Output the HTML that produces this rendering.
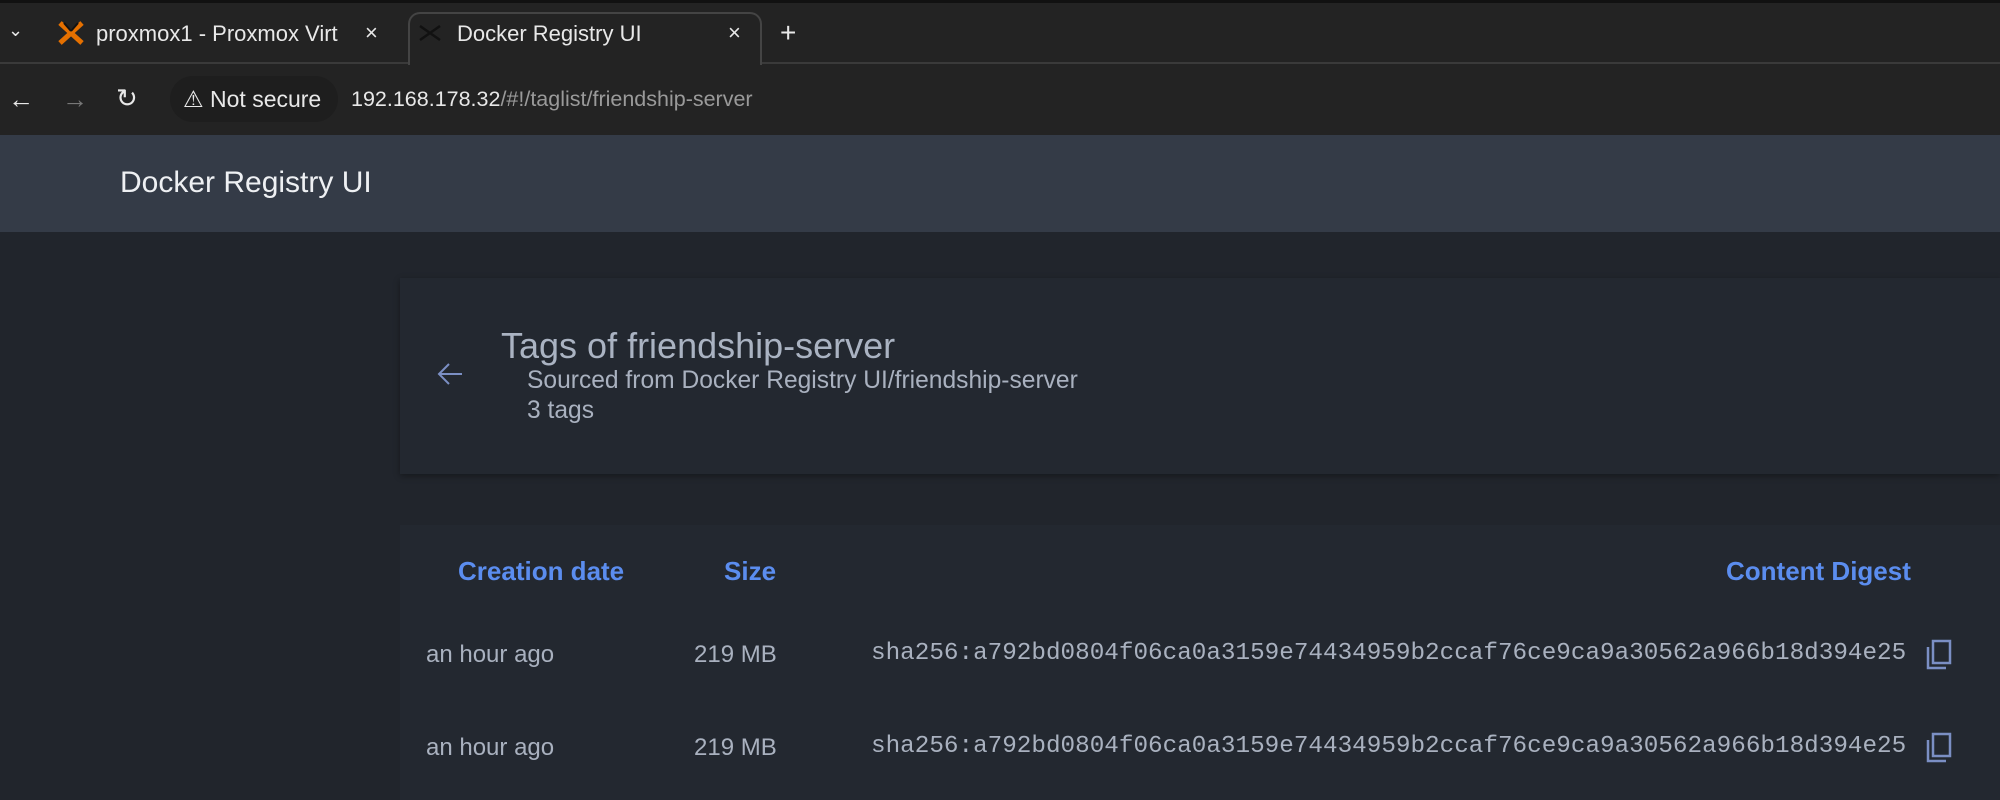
<!DOCTYPE html>
<html><head><meta charset="utf-8"><style>
*{margin:0;padding:0;box-sizing:border-box}
body{width:2000px;height:800px;overflow:hidden;background:#21252c;font-family:"Liberation Sans",sans-serif;position:relative}
.abs{position:absolute;white-space:nowrap}
#tabs{left:0;top:0;width:2000px;height:64px;background:#232323;border-top:3px solid #111}
#tool{left:0;top:64px;width:2000px;height:71px;background:#232323}
#sep{left:0;top:62px;width:2000px;height:2px;background:#3a3a3a}
#atab{left:408px;top:12px;width:354px;height:53px;background:#232323;border:2px solid #444;border-bottom:none;border-radius:12px 12px 0 0}
#hdr{left:0;top:135px;width:2000px;height:97px;background:#343b47}
.t{color:#e8e8e8;font-size:22px}
#card1{left:400px;top:278px;width:1600px;height:196px;background:#232830;box-shadow:0 2px 6px rgba(0,0,0,.35)}
#card2{left:400px;top:525px;width:1600px;height:275px;background:#232830}
.th{color:#5b8def;font-weight:bold;font-size:26px;font-family:"Liberation Sans Narrow","Liberation Sans",sans-serif}
.td{color:#a9b1bf;font-size:24px}
.mono{color:#a9b1bf;font-size:24.3px;font-family:"Liberation Mono",monospace}
</style></head><body>
<div class="abs" id="tabs"></div>
<div class="abs" id="tool"></div>
<div class="abs" id="sep"></div>
<div class="abs" id="atab"></div>
<div class="abs t" style="left:8px;top:20px;font-size:18px">&#8964;</div>
<svg class="abs" style="left:58px;top:21px" width="26" height="24" viewBox="0 0 26 24"><path d="M2 2L24 22M24 2L2 22" stroke="#e57000" stroke-width="5"/><path d="M6 2L13 10M20 2L13 10" stroke="#111" stroke-width="2"/></svg>
<div class="abs t" style="left:96px;top:21px">proxmox1 - Proxmox Virt</div>
<div class="abs t" style="left:365px;top:20px">×</div>
<svg class="abs" style="left:418px;top:24px" width="24" height="18"><path d="M2 2L22 16M22 2L2 16" stroke="#111" stroke-width="2.5"/></svg>
<div class="abs t" style="left:457px;top:21px">Docker Registry UI</div>
<div class="abs t" style="left:728px;top:20px">×</div>
<div class="abs t" style="left:780px;top:17px;font-size:28px">+</div>
<div class="abs t" style="left:8px;top:84px;font-size:26px">&#8592;</div>
<div class="abs t" style="left:62px;top:84px;font-size:26px;color:#777">&#8594;</div>
<div class="abs t" style="left:116px;top:83px;font-size:26px">&#8635;</div>
<div class="abs" style="left:170px;top:76px;width:168px;height:46px;border-radius:23px;background:#1e1e1e"></div>
<div class="abs t" style="left:183px;top:86px;font-size:23px">&#9888; Not secure</div>
<div class="abs t" style="left:351px;top:87px;font-size:21.5px">192.168.178.32<span style="color:#9a9a9a">/#!/taglist/friendship-server</span></div>
<div class="abs" id="hdr"></div>
<div class="abs" style="left:120px;top:166px;color:#eef0f3;font-size:30px">Docker Registry UI</div>
<div class="abs" id="card1"></div>
<svg class="abs" style="left:436px;top:362px" width="28" height="24"><path d="M26 12H3M13 2L3 12L13 22" stroke="#7b8fc4" stroke-width="2" fill="none"/></svg>
<div class="abs" style="left:501px;top:325px;color:#aab3c2;font-size:36px">Tags of friendship-server</div>
<div class="abs td" style="left:527px;top:367px;font-size:24.6px">Sourced from Docker Registry UI/friendship-server</div>
<div class="abs td" style="left:527px;top:397px;font-size:24.6px">3 tags</div>
<div class="abs" id="card2"></div>
<div class="abs th" style="left:458px;top:556px">Creation date</div>
<div class="abs th" style="left:724px;top:556px">Size</div>
<div class="abs th" style="left:1726px;top:556px">Content Digest</div>
<div class="abs td" style="left:426px;top:641px">an hour ago</div>
<div class="abs td" style="left:694px;top:641px">219 MB</div>
<div class="abs mono" style="left:871px;top:640px">sha256:a792bd0804f06ca0a3159e74434959b2ccaf76ce9ca9a30562a966b18d394e25</div>
<div class="abs td" style="left:426px;top:734px">an hour ago</div>
<div class="abs td" style="left:694px;top:734px">219 MB</div>
<div class="abs mono" style="left:871px;top:733px">sha256:a792bd0804f06ca0a3159e74434959b2ccaf76ce9ca9a30562a966b18d394e25</div>
<svg class="abs" style="left:1926px;top:639px" width="28" height="32"><rect x="7" y="2" width="17" height="22" stroke="#7b8fc4" stroke-width="2.5" fill="none"/><path d="M2 8V29H20" stroke="#7b8fc4" stroke-width="2.5" fill="none"/></svg>
<svg class="abs" style="left:1926px;top:732px" width="28" height="32"><rect x="7" y="2" width="17" height="22" stroke="#7b8fc4" stroke-width="2.5" fill="none"/><path d="M2 8V29H20" stroke="#7b8fc4" stroke-width="2.5" fill="none"/></svg>
</body></html>
